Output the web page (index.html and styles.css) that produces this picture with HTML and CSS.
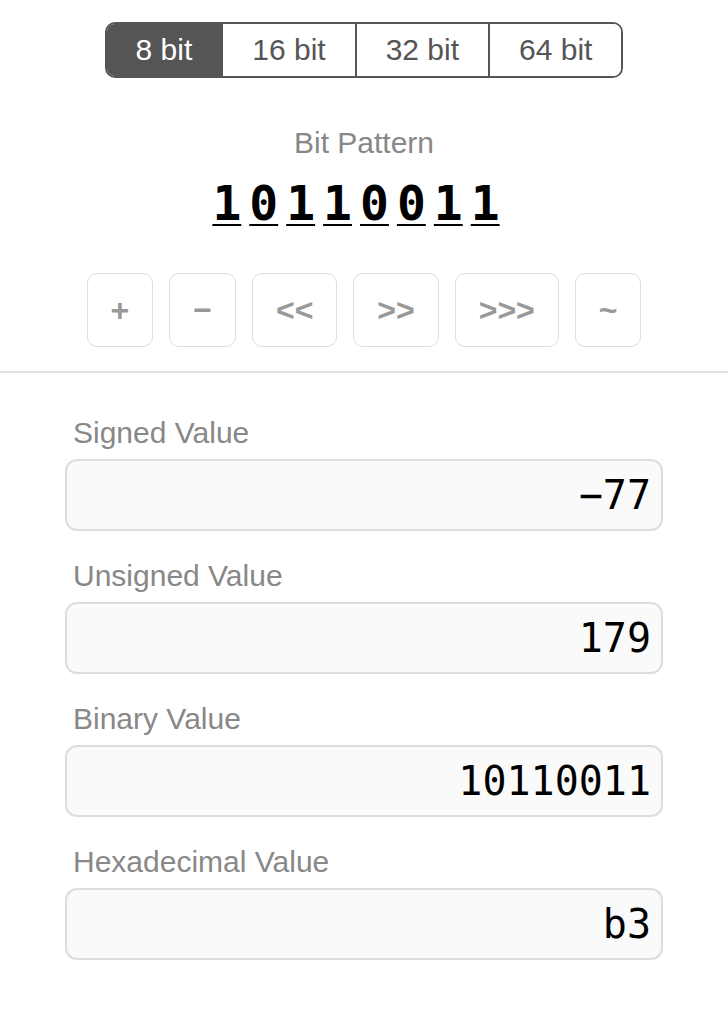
FILE: index.html
```html
<!DOCTYPE html>
<html lang="en">
<head>
<meta charset="utf-8">
<title>Bit Pattern</title>
<link rel="stylesheet" href="styles.css">
</head>
<body>
<div class="top">
  <div class="segmented">
    <div class="seg active">8 bit</div>
    <div class="seg">16 bit</div>
    <div class="seg">32 bit</div>
    <div class="seg">64 bit</div>
  </div>
  <div class="pattern-label">Bit Pattern</div>
  <div class="bits">
    <span class="bit">1</span><span class="bit">0</span><span class="bit">1</span><span class="bit">1</span><span class="bit">0</span><span class="bit">0</span><span class="bit">1</span><span class="bit">1</span>
  </div>
  <div class="ops">
    <button class="op">+</button>
    <button class="op">−</button>
    <button class="op">&lt;&lt;</button>
    <button class="op">&gt;&gt;</button>
    <button class="op">&gt;&gt;&gt;</button>
    <button class="op">~</button>
  </div>
</div>
<hr class="divider">
<div class="fields">
  <div class="field">
    <div class="label">Signed Value</div>
    <div class="value">−77</div>
  </div>
  <div class="field">
    <div class="label">Unsigned Value</div>
    <div class="value">179</div>
  </div>
  <div class="field">
    <div class="label">Binary Value</div>
    <div class="value">10110011</div>
  </div>
  <div class="field">
    <div class="label">Hexadecimal Value</div>
    <div class="value">b3</div>
  </div>
</div>
</body>
</html>
```
FILE: styles.css
```css
html, body {
  margin: 0;
  padding: 0;
  background: #fff;
  font-family: "Liberation Sans", Arial, sans-serif;
}

.top {
  display: flex;
  flex-direction: column;
  align-items: center;
  padding-top: 22px;
}

.segmented {
  display: flex;
  border: 2px solid #555;
  border-radius: 10px;
  overflow: hidden;
}

.seg {
  font-size: 30px;
  line-height: 52px;
  padding: 0 29px;
  color: #555;
  background: #fff;
}

.seg + .seg {
  border-left: 2px solid #555;
}

.seg.active {
  background: #555;
  color: #fff;
}

.pattern-label {
  margin-top: 48px;
  font-size: 30px;
  line-height: 34px;
  color: #888;
}

.bits {
  margin-top: 19px;
  display: flex;
  gap: 8px;
  padding-right: 16px;
}

.bit {
  font-family: "DejaVu Sans Mono", monospace;
  font-weight: bold;
  font-size: 48px;
  line-height: 48px;
  color: #000;
  text-decoration: underline;
  text-decoration-thickness: 2px;
  text-underline-offset: 4px;
}

.ops {
  margin-top: 46px;
  display: flex;
  gap: 16px;
}

.op {
  font-family: "Liberation Sans", Arial, sans-serif;
  font-size: 32px;
  font-weight: bold;
  height: 74px;
  padding: 0 23px;
  background: #fff;
  border: 1px solid #ddd;
  border-radius: 10px;
  color: #999;
}

.divider {
  margin: 24px 0 0;
  border: 0;
  border-top: 2px solid #e0e0e0;
}

.fields {
  padding: 43px 65px 0;
  display: flex;
  flex-direction: column;
  gap: 28px;
}

.label {
  font-size: 30px;
  line-height: 34px;
  color: #888;
  padding-left: 8px;
}

.value {
  margin-top: 9px;
  height: 68px;
  border: 2px solid #ddd;
  border-radius: 12px;
  background: #fafafa;
  font-family: "DejaVu Sans Mono", monospace;
  font-size: 40px;
  line-height: 68px;
  text-align: right;
  padding-right: 10px;
  color: #000;
}
```
